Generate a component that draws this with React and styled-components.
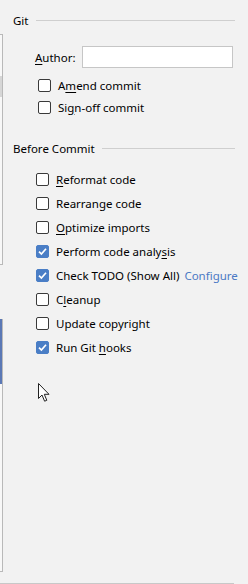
import React from 'react'
import styled, { createGlobalStyle } from 'styled-components'

const GlobalStyle = createGlobalStyle`
    html, body {
        margin: 0;
        padding: 0;
        background-color: #f2f2f2;
    }
    body {
        font-family: 'Noto Sans', 'DejaVu Sans', sans-serif;
        font-size: 11.5px;
        color: #000;
    }
`

const gitOptions = [
    { label: 'Amend commit', key: 1, checked: false },
    { label: 'Sign-off commit', key: 2, checked: false },
]

const beforeCommit = [
    { label: 'Reformat code', key: 0, checked: false },
    { label: 'Rearrange code', key: 7, checked: false },
    { label: 'Optimize imports', key: 0, checked: false },
    { label: 'Perform code analysis', key: 18, checked: true },
    { label: 'Check TODO (Show All)', key: -1, checked: true, link: 'Configure' },
    { label: 'Cleanup', key: 1, checked: false },
    { label: 'Update copyright', key: -1, checked: false },
    { label: 'Run Git hooks', key: 8, checked: true },
]

const Mnemonic = ({ text, index }) => {
    if (index < 0) return text
    return (
        <>
            {text.slice(0, index)}
            <U>{text[index]}</U>
            {text.slice(index + 1)}
        </>
    )
}

const CheckRow = ({ item, indent }) => (
    <Row $indent={indent}>
        <Box $checked={item.checked}>
            {item.checked && (
                <svg width="13" height="13" viewBox="0 0 13 13">
                    <path d="M3 6.6 L5.4 9 L10 3.8" fill="none" stroke="#fff" strokeWidth="1.7" />
                </svg>
            )}
        </Box>
        <Label><Mnemonic text={item.label} index={item.key} /></Label>
        {item.link && <Link>{item.link}</Link>}
    </Row>
)

export default function App() {
    return (
        <Page>
            <GlobalStyle />
            <Body>
                <LeftStrip>
                    <ListPanel $height={231}>
                        <Selection $top={41} $height={21} $color="#d6d6d6" />
                    </ListPanel>
                    <ListPanel $height={253} $gap={54} $open>
                        <Selection $top={0} $height={65} $color="#5b78b5" />
                    </ListPanel>
                </LeftStrip>
                <Content>
                    <Header>
                        <HeaderText>Git</HeaderText>
                        <HeaderLine />
                    </Header>
                    <AuthorRow>
                        <AuthorLabel><U>A</U>uthor:</AuthorLabel>
                        <Input />
                    </AuthorRow>
                    <GitList>
                        {gitOptions.map(o => <CheckRow key={o.label} item={o} indent={35} />)}
                    </GitList>
                    <Header $top={22}>
                        <HeaderText>Before Commit</HeaderText>
                        <HeaderLine />
                    </Header>
                    <CommitList>
                        {beforeCommit.map(o => <CheckRow key={o.label} item={o} indent={33} />)}
                    </CommitList>
                </Content>
                <Cursor width="13" height="20" viewBox="0 0 13 20">
                    <path d="M0.5 0.5 L0.5 15.5 L4 12 L6.6 18.2 L8.8 17.3 L6.3 11.3 L11 11.3 Z" fill="#fff" stroke="#222" strokeWidth="1" strokeLinejoin="miter" />
                </Cursor>
            </Body>
            <BottomLine />
        </Page>
    )
}

const Page = styled.div`
    width: 248px;
    height: 584px;
    display: flex;
    flex-direction: column;
    overflow: hidden;
`

const Body = styled.div`
    flex: 1;
    display: flex;
    flex-direction: row;
    position: relative;
`

const LeftStrip = styled.div`
    width: 3px;
    padding-top: 34px;
    display: flex;
    flex-direction: column;
`

const ListPanel = styled.div`
    position: relative;
    height: ${p => p.$height}px;
    margin-top: ${p => p.$gap || 0}px;
    box-sizing: border-box;
    background-color: #f8f8f8;
    border-right: 1px solid #b9b9b9;
    border-top: ${p => p.$open ? 'none' : '1px solid #b9b9b9'};
    border-bottom: 1px solid #b9b9b9;
`

const Selection = styled.div`
    position: absolute;
    left: 0;
    right: 0;
    top: ${p => p.$top}px;
    height: ${p => p.$height}px;
    background-color: ${p => p.$color};
`

const Content = styled.div`
    flex: 1;
    display: flex;
    flex-direction: column;
    padding-top: 12px;
`

const Header = styled.div`
    display: flex;
    align-items: center;
    gap: 7px;
    height: 16px;
    padding-left: 10px;
    padding-right: 13px;
    margin-top: ${p => p.$top || 0}px;
`

const HeaderText = styled.span`
    white-space: nowrap;
`

const HeaderLine = styled.div`
    flex: 1;
    height: 1px;
    background-color: #cfcfcf;
`

const AuthorRow = styled.div`
    display: flex;
    align-items: center;
    margin-top: 18px;
    padding-left: 32px;
    padding-right: 15px;
    height: 22px;
`

const AuthorLabel = styled.span`
    width: 47px;
`

const Input = styled.div`
    flex: 1;
    height: 22px;
    box-sizing: border-box;
    background-color: #fff;
    border: 1px solid #c6c6c6;
`

const GitList = styled.div`
    display: flex;
    flex-direction: column;
    margin-top: 6px;
`

const CommitList = styled.div`
    display: flex;
    flex-direction: column;
    margin-top: 11px;
`

const Row = styled.div`
    display: flex;
    align-items: center;
    height: ${p => p.$indent === 35 ? 22 : 24}px;
    padding-left: ${p => p.$indent}px;
    white-space: nowrap;
`

const Box = styled.div`
    width: 13px;
    height: 13px;
    box-sizing: border-box;
    border-radius: 2px;
    border: 1px solid ${p => p.$checked ? '#4a7ec6' : '#3a3a3a'};
    background-color: ${p => p.$checked ? '#4a7ec6' : '#fff'};
    display: flex;
    align-items: center;
    justify-content: center;
    margin-right: 7px;

    svg {
        margin: -1px;
    }
`

const Label = styled.span``

const U = styled.span`
    text-decoration: underline;
    text-underline-offset: 2px;
`

const Link = styled.span`
    color: #4b79c4;
    margin-left: 5px;
`

const Cursor = styled.svg`
    position: absolute;
    left: 38px;
    top: 383px;
`

const BottomLine = styled.div`
    height: 1px;
    width: 234px;
    background-color: #c8c8c8;
    flex-shrink: 0;
`
